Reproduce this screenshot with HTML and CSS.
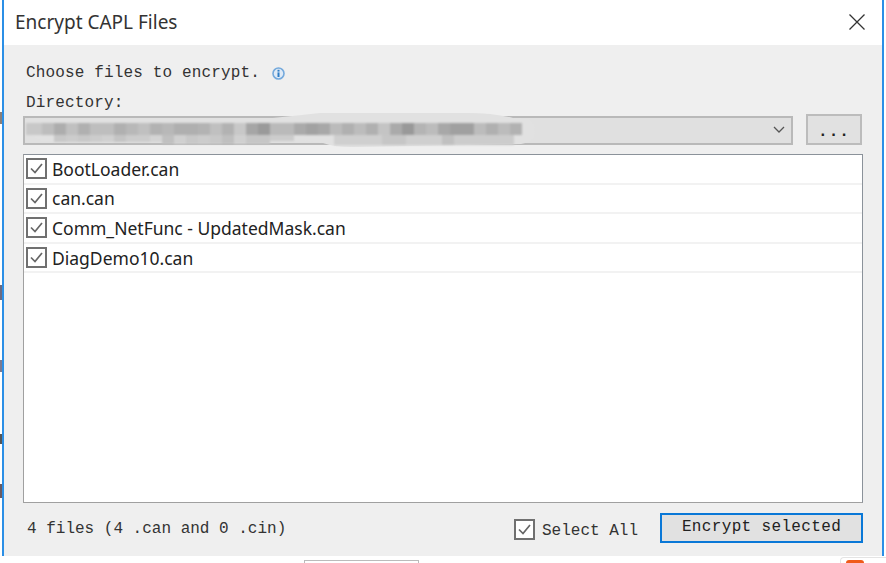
FILE: index.html
```html
<!DOCTYPE html>
<html lang="en">
<head>
    <meta charset="UTF-8">
    <meta name="viewport" content="width=device-width, initial-scale=1.0">
    <title>Encrypt CAPL Files</title>
    <link rel="stylesheet" href="styles.css">
</head>
<body>

    <div class="top">
        <div class="edge"></div>
        <div class="window">
            <div class="titlebar">
                <span class="title">Encrypt CAPL Files</span>
                <svg class="close" width="18" height="18" viewBox="0 0 18 18">
                    <path d="M1.500 1.500L16.500 16.500M16.500 1.500L1.500 16.500" stroke="#333" stroke-width="1.300" fill="none"/>
                </svg>
            </div>

            <div class="content">
                <div class="prompt">
                    <span>Choose files to encrypt.</span>
                    <svg class="info" width="13" height="13" viewBox="0 0 13 13">
                        <circle cx="6.500" cy="6.500" r="5.500" fill="#dfeaf6" stroke="#74a9dc" stroke-width="1.600"/>
                        <rect x="5.500" y="2.800" width="2" height="1.800" fill="#2f7cc4"/>
                        <rect x="5.500" y="5.400" width="2" height="4.600" fill="#2f7cc4"/>
                    </svg>
                </div>
                <div class="dir-label">Directory:</div>

                <div class="dir-row">
                    <div class="combo">
                        <!-- path is pixelated out in the original -->
                        <svg class="blurred" width="530" height="36" viewBox="0 0 530 36">
                            <defs>
                                <filter id="soft"><feGaussianBlur stdDeviation="0.800"/></filter>
                            </defs>
                            <path d="M2 5Q4 2 14 2L250 2Q280 -1 297 -3L445 -3Q470 -3 490 2L505 3Q512 8 512 15Q512 26 498 28L330 31Q310 31 300 27L280 24L190 25Q100 25 60 25L20 25Q2 18 2 5Z" fill="#e1e1e1"/>
                            <g filter="url(#soft)">
                                <rect x="3" y="7" width="16" height="12" fill="#c8c8c8"/>
                                <rect x="19" y="7" width="12" height="12" fill="#bdbdbd"/>
                                <rect x="31" y="7" width="12" height="12" fill="#adadad"/>
                                <rect x="43" y="7" width="12" height="12" fill="#c0c0c0"/>
                                <rect x="55" y="7" width="12" height="12" fill="#b0b0b0"/>
                                <rect x="67" y="7" width="24" height="12" fill="#bebebe"/>
                                <rect x="91" y="7" width="12" height="12" fill="#b0b0b0"/>
                                <rect x="103" y="7" width="12" height="12" fill="#b8b8b8"/>
                                <rect x="115" y="7" width="12" height="12" fill="#c0c0c0"/>
                                <rect x="127" y="7" width="12" height="12" fill="#b2b2b2"/>
                                <rect x="139" y="7" width="12" height="12" fill="#b8b8b8"/>
                                <rect x="151" y="7" width="24" height="12" fill="#afafaf"/>
                                <rect x="175" y="7" width="12" height="12" fill="#b3b3b3"/>
                                <rect x="187" y="7" width="12" height="12" fill="#c0c0c0"/>
                                <rect x="199" y="7" width="12" height="12" fill="#b2b2b2"/>
                                <rect x="211" y="7" width="12" height="12" fill="#c8c8c8"/>
                                <rect x="223" y="7" width="12" height="12" fill="#a6a6a6"/>
                                <rect x="235" y="7" width="12" height="12" fill="#9a9a9a"/>
                                <rect x="247" y="7" width="24" height="12" fill="#bababa"/>
                                <rect x="271" y="7" width="12" height="12" fill="#aaaaaa"/>
                                <rect x="283" y="7" width="12" height="12" fill="#a2a2a2"/>
                                <rect x="295" y="7" width="12" height="12" fill="#a8a8a8"/>
                                <rect x="307" y="7" width="12" height="12" fill="#bbbbbb"/>
                                <rect x="319" y="7" width="12" height="12" fill="#b0b0b0"/>
                                <rect x="331" y="7" width="12" height="12" fill="#bcbcbc"/>
                                <rect x="343" y="7" width="12" height="12" fill="#b0b0b0"/>
                                <rect x="355" y="7" width="12" height="12" fill="#c4c4c4"/>
                                <rect x="367" y="7" width="12" height="12" fill="#aaaaaa"/>
                                <rect x="379" y="7" width="12" height="12" fill="#999999"/>
                                <rect x="391" y="7" width="12" height="12" fill="#b4b4b4"/>
                                <rect x="403" y="7" width="12" height="12" fill="#bcbcbc"/>
                                <rect x="415" y="7" width="12" height="12" fill="#a8a8a8"/>
                                <rect x="427" y="7" width="24" height="12" fill="#a0a0a0"/>
                                <rect x="451" y="7" width="12" height="12" fill="#bcbcbc"/>
                                <rect x="463" y="7" width="12" height="12" fill="#b0b0b0"/>
                                <rect x="475" y="7" width="12" height="12" fill="#bcbcbc"/>
                                <rect x="487" y="7" width="12" height="12" fill="#b2b2b2"/>
                                <rect x="31" y="19" width="12" height="7" fill="#c8c8c8"/>
                                <rect x="43" y="19" width="12" height="7" fill="#cccccc"/>
                                <rect x="55" y="19" width="12" height="7" fill="#c8c8c8"/>
                                <rect x="67" y="19" width="12" height="7" fill="#cccccc"/>
                                <rect x="79" y="19" width="12" height="7" fill="#d0d0d0"/>
                                <rect x="91" y="19" width="12" height="7" fill="#c4c4c4"/>
                                <rect x="103" y="19" width="24" height="7" fill="#cccccc"/>
                                <rect x="127" y="19" width="12" height="7" fill="#d4d4d4"/>
                                <rect x="139" y="19" width="12" height="9" fill="#c0c0c0"/>
                                <rect x="151" y="19" width="12" height="9" fill="#d0d0d0"/>
                                <rect x="163" y="19" width="12" height="9" fill="#c8c8c8"/>
                                <rect x="175" y="19" width="12" height="9" fill="#cccccc"/>
                                <rect x="187" y="19" width="12" height="9" fill="#c8c8c8"/>
                                <rect x="199" y="19" width="12" height="9" fill="#bfbfbf"/>
                                <rect x="211" y="19" width="12" height="9" fill="#d0d0d0"/>
                                <rect x="223" y="19" width="24" height="9" fill="#c6c6c6"/>
                                <rect x="247" y="19" width="24" height="6" fill="#cccccc"/>
                                <rect x="311" y="19" width="48" height="10" fill="#cfcfcf"/>
                                <rect x="359" y="19" width="24" height="10" fill="#c6c6c6"/>
                                <rect x="383" y="19" width="36" height="10" fill="#cfcfcf"/>
                                <rect x="419" y="19" width="12" height="10" fill="#c0c0c0"/>
                                <rect x="431" y="19" width="60" height="10" fill="#cccccc"/>
                            </g>
                        </svg>
                        <svg class="arrow" width="12" height="8" viewBox="0 0 12 8">
                            <path d="M1 1L6 6L11 1" stroke="#555" stroke-width="1.300" fill="none"/>
                        </svg>
                    </div>
                    <button class="browse">...</button>
                </div>

                <div class="file-list">
                    <div class="file-row"><span class="check"><svg width="17" height="17" viewBox="0 0 17 17"><path d="M3 8.500L7 12.500L14 4" stroke="#666" stroke-width="1.700" fill="none"/></svg></span>BootLoader.can</div>
                    <div class="file-row"><span class="check"><svg width="17" height="17" viewBox="0 0 17 17"><path d="M3 8.500L7 12.500L14 4" stroke="#666" stroke-width="1.700" fill="none"/></svg></span>can.can</div>
                    <div class="file-row"><span class="check"><svg width="17" height="17" viewBox="0 0 17 17"><path d="M3 8.500L7 12.500L14 4" stroke="#666" stroke-width="1.700" fill="none"/></svg></span>Comm_NetFunc - UpdatedMask.can</div>
                    <div class="file-row"><span class="check"><svg width="17" height="17" viewBox="0 0 17 17"><path d="M3 8.500L7 12.500L14 4" stroke="#666" stroke-width="1.700" fill="none"/></svg></span>DiagDemo10.can</div>
                </div>

                <div class="footer">
                    <span class="count">4 files (4 .can and 0 .cin)</span>
                    <label class="select-all"><span class="check"><svg width="17" height="17" viewBox="0 0 17 17"><path d="M3 8.500L7 12.500L14 4" stroke="#666" stroke-width="1.700" fill="none"/></svg></span><span class="select-text">Select All</span></label>
                    <button class="encrypt">Encrypt selected</button>
                </div>
            </div>
        </div>
    </div>

    <div class="bottom">
        <div class="task-box"></div>
        <div class="corner"><span class="corner-mark"></span></div>
    </div>

</body>
</html>
```

FILE: styles.css
```css
* {
    box-sizing: border-box;
}
html, body {
    margin: 0;
    height: 563px;
    overflow: hidden;
}
body {
    width: 886px;
    background: white;
    color: #333;
    font-family: 'Liberation Mono', monospace;
    font-size: 16px;
}
.top {
    display: flex;
    height: 556px;
}
.edge {
    width: 2px;
    background: linear-gradient(#fff 0, #fff 112px, #8a7f78 112px, #8a7f78 124px, #fff 124px, #fff 285px, #6a6a80 285px, #6a6a80 300px, #fff 300px, #fff 360px, #7a7a90 360px, #7a7a90 372px, #fff 372px, #fff 434px, #555 434px, #555 444px, #fff 444px, #fff 484px, #6a5a60 484px, #6a5a60 498px, #fff 498px);
}
.window {
    width: 882px;
    border-left: 2px solid #2b8fe6;
    border-right: 2px solid #2b8fe6;
    display: flex;
    flex-direction: column;
}
.titlebar {
    height: 45px;
    flex-shrink: 0;
    display: flex;
    align-items: center;
    justify-content: space-between;
    padding: 0 16px 1px 11px;
    background: white;
}
.title {
    font-family: 'Noto Sans', sans-serif;
    font-size: 19px;
    color: #333;
}
.content {
    flex: 1;
    background: #efefef;
    padding: 19px 16px 0 19px;
}
.prompt {
    display: flex;
    align-items: center;
    gap: 12px;
    height: 18px;
    margin-left: 3px;
    letter-spacing: 0.150px;
}
.dir-label {
    height: 18px;
    margin: 12px 0 0 3px;
    letter-spacing: 0.150px;
    line-height: 18px;
}
.dir-row {
    display: flex;
    align-items: center;
    justify-content: space-between;
    width: 839px;
    margin-top: 2px;
}
.combo {
    width: 770px;
    height: 29px;
    margin-top: 1px;
    background: #e0e0e0;
    border: 2px solid #b9b9b9;
    display: flex;
    align-items: center;
    justify-content: flex-end;
    padding-right: 6px;
    position: relative;
}
.blurred {
    position: absolute;
    left: -2px;
    top: -2px;
    overflow: visible;
}
.arrow {
    position: relative;
}
button {
    font-family: 'Liberation Mono', monospace;
    font-size: 16px;
    color: #222;
    background: #e1e1e1;
    padding: 0;
}
.browse {
    width: 56px;
    height: 31px;
    border: 2px solid #bcbcbc;
    font-weight: bold;
    letter-spacing: 1px;
    padding-top: 4px;
}
.file-list {
    margin-top: 9px;
    width: 840px;
    height: 349px;
    background: white;
    border: 1px solid #8b929a;
    border-bottom-color: #a0a0a0;
    border-left-color: #a0a0a0;
}
.file-row {
    height: 29.600px;
    display: flex;
    align-items: center;
    gap: 5px;
    padding-left: 2px;
    border-bottom: 2px solid #f2f2f2;
    font-family: 'Noto Sans', sans-serif;
    font-size: 17.500px;
    color: #222;
}
.check {
    width: 21px;
    height: 21px;
    flex-shrink: 0;
    border: 2px solid #707070;
    background: white;
    display: flex;
    align-items: center;
    justify-content: center;
}
.footer {
    display: flex;
    align-items: center;
    width: 840px;
    height: 30px;
    margin-top: 10px;
}
.count {
    margin: 2px 0 0 4px;
}
.select-all {
    display: flex;
    align-items: center;
    gap: 7px;
    margin-left: auto;
    margin-right: 22px;
    margin-top: 2px;
}
.select-all .check {
    margin-left: -2px;
}
.select-text {
    padding-top: 4px;
}
.encrypt {
    width: 203px;
    height: 30px;
    border: 2px solid #0a78d7;
    padding-bottom: 3px;
    letter-spacing: 0.350px;
}
.bottom {
    display: flex;
    height: 7px;
}
.task-box {
    width: 115px;
    height: 3px;
    margin: 4px 0 0 304px;
    border: 1px solid #bbb;
    border-bottom: none;
}
.corner {
    width: 46px;
    height: 6px;
    margin: 1px 0 0 auto;
    padding: 2px 0 0 5px;
    background: white;
    border-top: 1px solid #e4e4e4;
    border-left: 1px solid #e4e4e4;
    border-top-left-radius: 4px;
}
.corner-mark {
    display: block;
    width: 18px;
    height: 3px;
    background: #f05a1a;
    border-radius: 3px 3px 0 0;
}
```
